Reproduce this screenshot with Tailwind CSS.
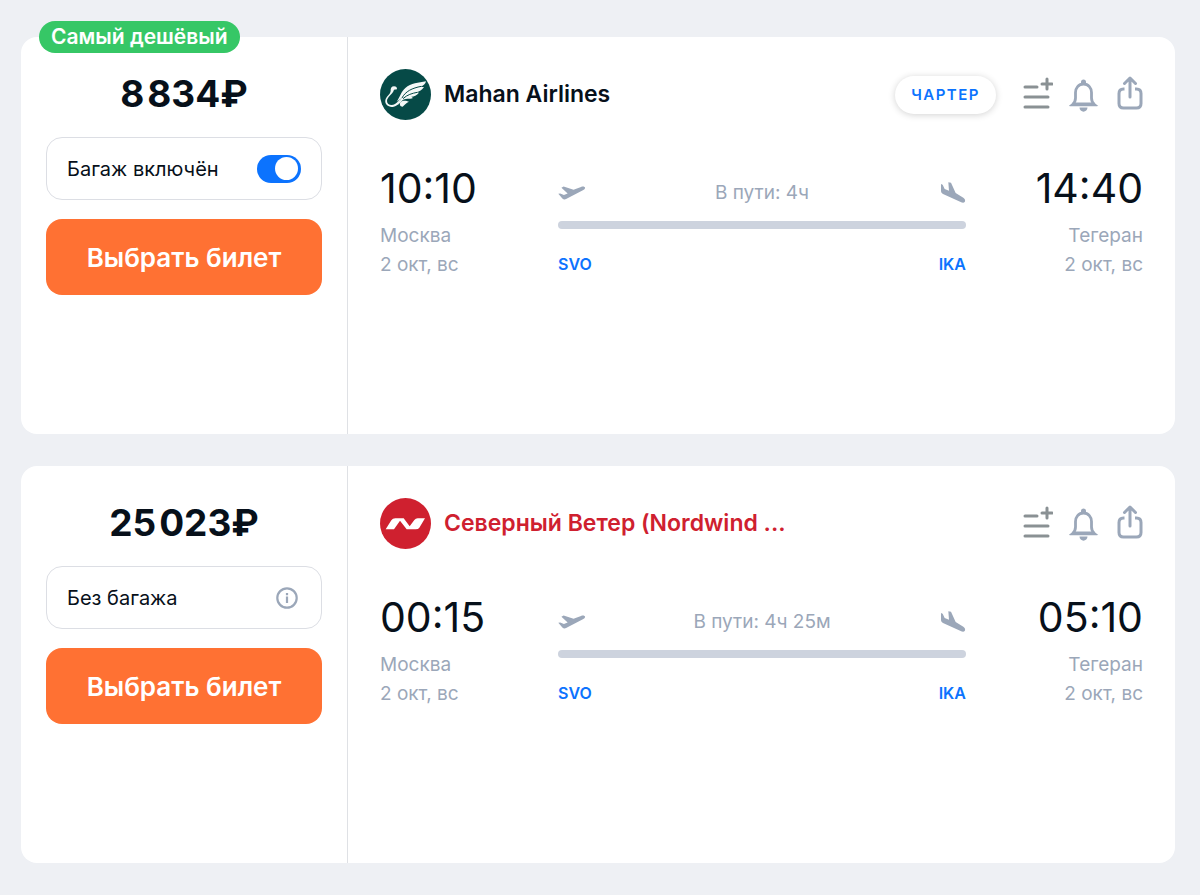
<!DOCTYPE html>
<html lang="ru">
<head>
    <meta charset="UTF-8">
    <meta name="viewport" content="width=device-width, initial-scale=1.0">
    <title>Билеты Москва — Тегеран</title>
    <script src="https://cdn.jsdelivr.net/npm/@tailwindcss/browser@4"></script>
</head>
<body class="bg-[#eef0f4] font-['Inter',sans-serif] text-[#07101a]">
    <!-- shared icons -->
    <svg class="hidden">
        <symbol id="list" viewBox="0 0 32 38">
            <path d="M4 11H16M4 21H27M4 31H27M21 8H31M26 3V13" fill="none" stroke="#8a9194" stroke-width="3" stroke-linecap="round" />
        </symbol>
        <symbol id="bell" viewBox="0 0 30 38">
            <path d="M14.500 8C9.500 8 6.500 12 6.500 16.500V22C6.500 25.500 5.500 27 3.500 28.700H25.500C23.500 27 22.500 25.500 22.500 22V16.500C22.500 12 19.500 8 14.500 8Z" fill="none" stroke="#9ba7b9" stroke-width="2.800" />
            <path d="M12 7.500V6A2.500 2.500 0 0 1 17 6V7.500ZM10.500 31.500H18.500C18.500 37 10.500 37 10.500 31.500ZM0.500 30.200L4 26.500H25L28.500 30.200Z" fill="#9ba7b9" />
        </symbol>
        <symbol id="share" viewBox="0 0 28 38">
            <path d="M9.500 13H8.500Q4 13 4 17.500V27.500Q4 32 8.500 32H21.500Q26 32 26 27.500V17.500Q26 13 21.500 13H20" fill="none" stroke="#9ba7b9" stroke-width="3" />
            <path d="M15 21V2.500M9.500 7.500L15 2L20.500 7.500" fill="none" stroke="#9ba7b9" stroke-width="3" stroke-linecap="round" stroke-linejoin="round" />
        </symbol>
        <symbol id="takeoff" viewBox="0 0 90 45" preserveAspectRatio="xMinYMid">
            <path d="M1 25L7 24L19 29L31 24L11 6L18 2L50 12L74 3C80 0 87 2 87 6C87 10 84 12 80 14L26 42Q19 45 14 40Z" fill="#9ba7b9" />
        </symbol>
        <symbol id="landing" viewBox="0 0 76 66" preserveAspectRatio="xMaxYMid">
            <path d="M1 6L6 8L12 21L25 26L23 1L31 2L45 33L68 47C73 50 75 56 72 60C69 64 64 62 60 60L7 36Q1 33 1 28Z" fill="#9ba7b9" />
        </symbol>
    </svg>

    <main class="flex flex-col gap-8 pl-[21px] pr-[25px] pt-[37px] pb-8">
        <article class="relative flex min-h-[397px] rounded-2xl bg-white">
            <div class="absolute -top-4 left-[18px] h-8 rounded-full bg-[#36c766] px-3 text-[21px] leading-8 font-semibold text-white">Самый дешёвый</div>
            <div class="w-[327px] shrink-0 border-r border-[#dfe1e5] px-[25px] pt-8">
                <div class="text-center text-[37px] leading-[50px] font-bold">8&#8202;834₽</div>
                <label class="mt-[18px] flex h-[63px] items-center justify-between rounded-2xl border border-[#dcdee4] px-5 text-[20px]">
                    Багаж включён
                    <input type="checkbox" role="switch" checked class="flex h-7 w-11 cursor-pointer appearance-none items-center rounded-full bg-[#cdd3de] px-[3px] before:size-[23px] before:rounded-full before:bg-white before:content-[''] checked:justify-end checked:bg-[#0c73fe]">
                </label>
                <button type="button" class="mt-[19px] h-[76px] w-full cursor-pointer rounded-2xl bg-[#ff7133] text-[26px] font-semibold text-white">Выбрать билет</button>
            </div>
            <div class="min-w-0 flex-1 px-8 pt-8">
                <div class="flex h-[51px] items-center">
                    <svg class="size-[51px] shrink-0" viewBox="0 0 153 153">
                        <circle cx="76.500" cy="76.500" r="76.500" fill="#064a47" />
                        <path d="M32 66C31 57 35 52 42 52C49 52 51 56 51 61L42 62C38 76 21 83 21 96C21 107 34 111 45 105C52 101 58 93 64 86C61 97 54 110 41 113C27 116 14 108 16 94C18 82 31 77 32 66Z" fill="#f4f8f7" />
                        <path d="M50 98C61 82 63 68 76 57C93 42 115 41 138 37C137 44 130 50 122 54L132 54C126 64 118 67 110 70L117 71C110 80 102 82 94 83L99 87C88 92 76 86 66 95C62 99 57 106 50 109C56 102 61 93 65 87Z" fill="#f4f8f7" />
                        <path d="M66 87C76 67 97 57 124 52M69 89C82 77 96 73 112 70" fill="none" stroke="#064a47" stroke-width="3" />
                        <path d="M62 99C71 92 81 97 87 98C78 101 75 107 68 113C59 113 58 104 62 99Z" fill="#f4f8f7" />
                    </svg>
                    <div class="ml-[13px] truncate text-[23px] font-semibold">Mahan Airlines</div>
                    <div class="ml-auto flex items-center gap-4">
                        <a href="#" class="mr-[9px] h-[38px] rounded-full px-4 text-[15px] leading-[38px] font-semibold tracking-widest text-[#0c73fe] shadow-[0_1px_7px_rgba(0,0,0,0.18)]">ЧАРТЕР</a>
                        <button type="button" aria-label="Добавить в список" class="cursor-pointer"><svg class="h-[38px] w-8"><use href="#list" /></svg></button>
                        <button type="button" aria-label="Следить за ценой" class="cursor-pointer"><svg class="h-[38px] w-[30px]"><use href="#bell" /></svg></button>
                        <button type="button" aria-label="Поделиться" class="cursor-pointer"><svg class="h-[38px] w-7"><use href="#share" /></svg></button>
                    </div>
                </div>
                <div class="mt-11 grid grid-cols-[178px_1fr_177px]">
                    <div>
                        <div class="text-[41px] leading-[48px]">10:10</div>
                        <div class="mt-[9px] text-[19px] leading-[29px] text-[#9ba7b9]">Москва<br>2 окт, вс</div>
                    </div>
                    <div class="pt-[5px]">
                        <div class="flex h-12 items-center justify-between text-[19px] text-[#9ba7b9]">
                            <svg class="h-[14px] w-[28px]"><use href="#takeoff" /></svg>
                            В пути: 4ч
                            <svg class="h-[22px] w-[28px]"><use href="#landing" /></svg>
                        </div>
                        <div class="mt-1 h-2 rounded-full bg-[#cdd3de]"></div>
                        <div class="mt-[21px] flex justify-between text-[16px] leading-[29px] font-semibold text-[#0c73fe]">
                            <span>SVO</span>
                            <span>IKA</span>
                        </div>
                    </div>
                    <div class="text-right">
                        <div class="text-[41px] leading-[48px]">14:40</div>
                        <div class="mt-[9px] text-[19px] leading-[29px] text-[#9ba7b9]">Тегеран<br>2 окт, вс</div>
                    </div>
                </div>
            </div>
        </article>

        <article class="relative flex min-h-[397px] rounded-2xl bg-white">
            <div class="w-[327px] shrink-0 border-r border-[#dfe1e5] px-[25px] pt-8">
                <div class="text-center text-[37px] leading-[50px] font-bold">25&#8202;023₽</div>
                <div class="mt-[18px] flex h-[63px] items-center justify-between rounded-2xl border border-[#dcdee4] px-5 text-[20px]">
                    Без багажа
                    <button type="button" aria-label="О багаже" class="flex size-7 cursor-pointer items-center justify-center">
                        <svg class="size-[22px]" viewBox="0 0 22 22" fill="none" stroke="#9ba7b9" stroke-width="2.200">
                            <circle cx="11" cy="11" r="9.700" />
                            <path d="M11 9.500V16M11 6V8.200" />
                        </svg>
                    </button>
                </div>
                <button type="button" class="mt-[19px] h-[76px] w-full cursor-pointer rounded-2xl bg-[#ff7133] text-[26px] font-semibold text-white">Выбрать билет</button>
            </div>
            <div class="min-w-0 flex-1 px-8 pt-8">
                <div class="flex h-[51px] items-center">
                    <svg class="size-[51px] shrink-0" viewBox="0 0 153 153">
                        <circle cx="76.500" cy="76.500" r="76.500" fill="#cf202f" />
                        <path d="M17 94L34 67Q38 61 46 61H71L89 85L103 66Q107 61 113 61H135L118 89Q115 94 107 94H80L60 68L42 94Z" fill="#fff" />
                    </svg>
                    <div class="ml-[13px] truncate text-[23px] font-semibold text-[#cf202f]">Северный Ветер (Nordwind ...</div>
                    <div class="ml-auto flex items-center gap-4">
                        <button type="button" aria-label="Добавить в список" class="cursor-pointer"><svg class="h-[38px] w-8"><use href="#list" /></svg></button>
                        <button type="button" aria-label="Следить за ценой" class="cursor-pointer"><svg class="h-[38px] w-[30px]"><use href="#bell" /></svg></button>
                        <button type="button" aria-label="Поделиться" class="cursor-pointer"><svg class="h-[38px] w-7"><use href="#share" /></svg></button>
                    </div>
                </div>
                <div class="mt-11 grid grid-cols-[178px_1fr_177px]">
                    <div>
                        <div class="text-[41px] leading-[48px]">00:15</div>
                        <div class="mt-[9px] text-[19px] leading-[29px] text-[#9ba7b9]">Москва<br>2 окт, вс</div>
                    </div>
                    <div class="pt-[5px]">
                        <div class="flex h-12 items-center justify-between text-[19px] text-[#9ba7b9]">
                            <svg class="h-[14px] w-[28px]"><use href="#takeoff" /></svg>
                            В пути: 4ч 25м
                            <svg class="h-[22px] w-[28px]"><use href="#landing" /></svg>
                        </div>
                        <div class="mt-1 h-2 rounded-full bg-[#cdd3de]"></div>
                        <div class="mt-[21px] flex justify-between text-[16px] leading-[29px] font-semibold text-[#0c73fe]">
                            <span>SVO</span>
                            <span>IKA</span>
                        </div>
                    </div>
                    <div class="text-right">
                        <div class="text-[41px] leading-[48px]">05:10</div>
                        <div class="mt-[9px] text-[19px] leading-[29px] text-[#9ba7b9]">Тегеран<br>2 окт, вс</div>
                    </div>
                </div>
            </div>
        </article>
    </main>
</body>
</html>
